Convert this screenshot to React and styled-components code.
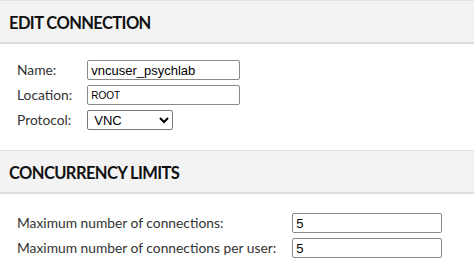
import styled, { createGlobalStyle } from "styled-components";

const GlobalStyle = createGlobalStyle`
  html, body {
    margin: 0;
    padding: 0;
    background: #ffffff;
  }
  body {
    font-family: Lato, "Noto Sans", "Liberation Sans", sans-serif;
    color: #222;
  }
`;

const Page = styled.div`
  width: 474px;
  height: 280px;
  overflow: hidden;
  background: #fff;
`;

const SectionHeader = styled.div`
  box-sizing: border-box;
  height: 44px;
  margin-top: ${(p) => p.$top || 0}px;
  padding: 3px 9px 0;
  display: flex;
  align-items: center;
  background: #f3f3f3;
  border-top: 1px solid #e2e2e2;
  border-bottom: 2px solid #dedede;
  font-size: 16.5px;
  font-weight: 700;
  color: #111;
  letter-spacing: -0.6px;
`;

const FieldTable = styled.div`
  display: grid;
  grid-template-columns: max-content max-content;
  column-gap: ${(p) => p.$gap || 13}px;
  row-gap: 5px;
  align-items: center;
  padding: ${(p) => p.$pad || "16px 0 0 17px"};
`;

const Label = styled.label`
  font-size: 13.8px;
  color: #333;
  line-height: 20px;
`;

const TextInput = styled.input`
  box-sizing: border-box;
  width: ${(p) => p.$w || 153}px;
  height: 20px;
  margin: 0;
  padding: 1px 3px;
  border: 1px solid #8a8a8a;
  border-radius: 2px;
  font-family: "Liberation Sans", Arial, sans-serif;
  font-size: 13px;
  color: #000;
  background: #fff;
`;

const LocationBox = styled.div`
  box-sizing: border-box;
  width: 153px;
  height: 20px;
  padding: 0 3px;
  border: 1px solid #8a8a8a;
  border-radius: 2px;
  display: flex;
  align-items: center;
  font-family: "Liberation Sans", Arial, sans-serif;
  font-size: 10px;
  color: #000;
`;

const Select = styled.select`
  box-sizing: border-box;
  width: 86px;
  height: 20px;
  margin: 0;
  padding: 0 0 0 2px;
  border: 1px solid #767676;
  border-radius: 2px;
  font-family: "Liberation Sans", Arial, sans-serif;
  font-size: 13px;
  color: #000;
  background: #fff;
`;

const Row = styled.div`
  display: contents;
`;

export default function App() {
  return (
    <Page>
      <GlobalStyle />
      <SectionHeader>EDIT CONNECTION</SectionHeader>
      <FieldTable $gap={15}>
        <Row>
          <Label>Name:</Label>
          <TextInput defaultValue="vncuser_psychlab" />
        </Row>
        <Row>
          <Label>Location:</Label>
          <LocationBox>ROOT</LocationBox>
        </Row>
        <Row>
          <Label>Protocol:</Label>
          <Select defaultValue="vnc">
            <option value="vnc">VNC</option>
            <option value="rdp">RDP</option>
            <option value="ssh">SSH</option>
          </Select>
        </Row>
      </FieldTable>
      <SectionHeader $top={20}>CONCURRENCY LIMITS</SectionHeader>
      <FieldTable $pad="19px 0 0 17px" $gap={16}>
        <Row>
          <Label>Maximum number of connections:</Label>
          <TextInput $w={150} defaultValue="5" />
        </Row>
        <Row>
          <Label>Maximum number of connections per user:</Label>
          <TextInput $w={150} defaultValue="5" />
        </Row>
      </FieldTable>
    </Page>
  );
}
